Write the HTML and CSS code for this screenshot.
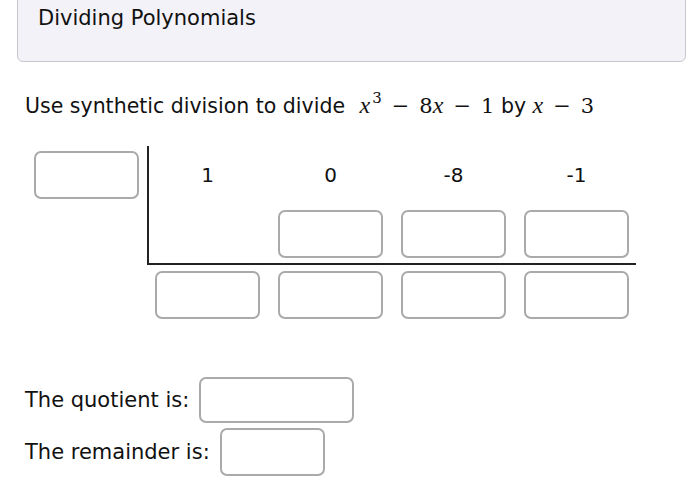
FILE: index.html
```html
<!DOCTYPE html>
<html>
<head>
<meta charset="utf-8">
<link rel="stylesheet" href="styles.css">
</head>
<body>
<div class="header"><div class="title">Dividing Polynomials</div></div>
<p class="question">Use synthetic division to divide <span class="math first"><i>x</i><sup>3</sup><span class="op">−</span>8<i>x</i><span class="op">−</span>1</span> by <span class="math"><i>x</i><span class="op">−</span>3</span></p>
<div class="synth">
  <div class="divisor"><div class="box"></div></div>
  <div class="table">
    <div class="row coefs"><span>1</span><span>0</span><span>-8</span><span>-1</span></div>
    <div class="row mid"><span></span><div class="box"></div><div class="box"></div><div class="box"></div></div>
    <div class="row bottom"><div class="box"></div><div class="box"></div><div class="box"></div><div class="box"></div></div>
  </div>
</div>
<div class="answers">
  <div class="answer"><span>The quotient is:</span><div class="box wide"></div></div>
  <div class="answer"><span>The remainder is:</span><div class="box"></div></div>
</div>
</body>
</html>
```
FILE: styles.css
```css
html, body { margin: 0; padding: 0; background: #fff; }
body { font-family: "DejaVu Sans", Verdana, sans-serif; color: #111; font-size: 21px; }
.header {
  margin: -12px 14px 0 17px;
  height: 74px;
  background: #f2f2f8;
  border: 1px solid #c8c8cc;
  border-radius: 6px;
  box-sizing: border-box;
  padding: 17px 0 0 20px;
}
.title { font-size: 21px; line-height: 24px; }
.question { margin: 24px 0 0 25px; line-height: 24px; font-size: 20.5px; }
.math { font-family: "DejaVu Serif", "Liberation Serif", serif; font-size: 21px; }
.math.first { margin-left: 8px; }
.math i { font-family: "Liberation Serif", serif; font-size: 24px; }
.math sup { font-size: 15px; vertical-align: 10px; margin-left: 2px; }
.op { margin: 0 10px; }
.box {
  width: 105px; height: 48px;
  border: 2px solid #aaa;
  border-radius: 7px;
  box-sizing: border-box;
  background: #fff;
}
.synth { display: flex; margin: 28px 0 0 34px; }
.divisor { padding-top: 5px; width: 113px; }
.table {
  border-left: 2px solid #222;
  padding-left: 6px;
  height: 119px;
}
.row { display: grid; grid-template-columns: repeat(4, 105px); column-gap: 18px; }
.coefs {
  height: 64px;
  box-sizing: border-box;
  padding-bottom: 6px;
  align-items: center;
  text-align: center;
  font-size: 20px;
}
.mid {
  box-sizing: border-box;
  width: 489px;
  padding: 0 0 5px 8px;
  margin-left: -8px;
  border-bottom: 2px solid #222;
}
.bottom { margin-top: 6px; }
.answers { margin: 112px 0 0 25px; }
.answer { display: flex; align-items: center; gap: 10px; margin-bottom: 5px; }
.answer .box.wide { width: 155px; height: 46px; }
```
